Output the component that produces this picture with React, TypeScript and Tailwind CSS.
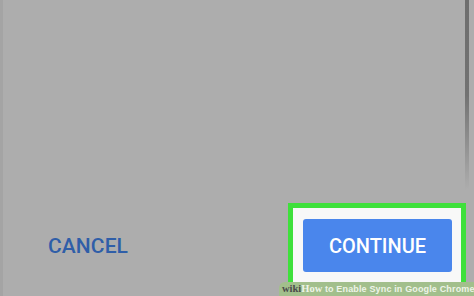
export default function App() {
  return (
    <div className="relative w-[474px] h-[296px] overflow-hidden bg-[#adadad] flex flex-col" style={{ fontFamily: "Roboto, 'Liberation Sans', sans-serif" }}>
      <div className="absolute left-0 top-0 h-full w-[3px] bg-[#a4a4a4]" />
      <div className="absolute right-[5px] top-0 h-[190px] w-[4px] bg-gradient-to-b from-[#6e6e6e] via-[#727272] to-transparent" />
      <div className="flex-1" />
      <div className="flex items-center pl-[48px] pr-[8px] pb-[7px]">
        <span className="text-[21px] font-medium text-[#2f5ea8] leading-none tracking-[0.1px]">CANCEL</span>
        <div className="ml-auto w-[178px] h-[86px] border-[5px] border-[#3ee03b] bg-[#f8f8f8] pl-[10px] pr-[9px] pt-[11px]">
          <div className="h-[53px] rounded-[3px] bg-[#4a86ec] flex items-center justify-center">
            <span className="text-[20px] font-medium text-white leading-none">CONTINUE</span>
          </div>
        </div>
      </div>
      <div className="absolute right-0 bottom-0 w-[195px] h-[14px] bg-[#a2bf8c] rounded-tl-[6px] flex items-center pl-[3px] pt-[1px] text-[9px] font-bold text-[#eef4e8] leading-none whitespace-nowrap" style={{ fontFamily: "'Liberation Sans', Arial, sans-serif" }}>
        <span className="text-[10.5px] text-[#4b4b4b]" style={{ fontFamily: "'Liberation Serif', serif" }}>wiki</span>
        <span className="text-[10.5px]" style={{ fontFamily: "'Liberation Serif', serif" }}>How</span>
        <span className="tracking-[0.15px]">&nbsp;to Enable Sync in Google Chrome</span>
      </div>
    </div>
  );
}
